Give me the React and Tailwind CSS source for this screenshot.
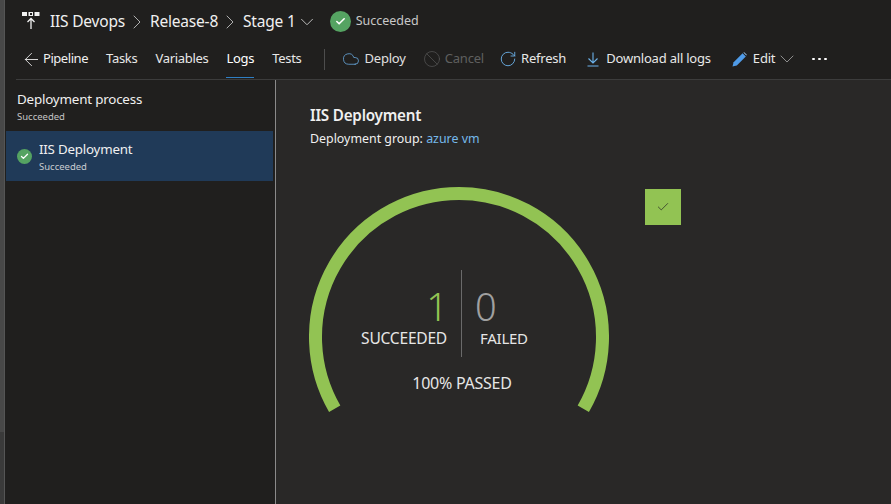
import React from "react";
import { ArrowLeft, ChevronDown, ChevronRight, Cloud, Ban, RotateCw, Check } from "lucide-react";

const tabs = ["Tasks", "Variables", "Logs", "Tests"];

const StatusDot = ({ size, icon }) => (
  <span className={`flex shrink-0 items-center justify-center rounded-full bg-[#55a362] ${size}`}>
    <Check size={icon} strokeWidth={3.5} className="text-white" />
  </span>
);

const AppIcon = () => (
  <svg width="18" height="18" viewBox="0 0 18 18" className="shrink-0">
    <rect x="0" y="0" width="5" height="4" fill="#f2f2f2" />
    <rect x="6.5" y="0" width="4.5" height="4" fill="#f2f2f2" />
    <rect x="12.5" y="0" width="5" height="4" fill="#f2f2f2" />
    <rect x="8" y="1" width="2" height="2" fill="#1f1f1f" />
    <path d="M9 17V6.5M5.5 10L9 6.5L12.5 10" stroke="#f2f2f2" strokeWidth="1.3" fill="none" />
  </svg>
);

const DownloadIcon = () => (
  <svg width="12" height="15" viewBox="0 0 12 15" className="shrink-0">
    <path d="M6 0.5V11M1.5 6.5L6 11L10.5 6.5M0.5 14H11.5" stroke="#6cb2eb" strokeWidth="1.1" fill="none" />
  </svg>
);

const PencilIcon = () => (
  <svg width="15" height="15" viewBox="0 0 15 15" className="shrink-0">
    <path d="M0.5 14.5L1.6 10.2L10.6 1.2L13.8 4.4L4.8 13.4Z" fill="#4f9be8" />
    <path d="M11.4 0.6L12.2 0.2L14.8 2.8L14.4 3.6Z" fill="#9cc9f2" />
  </svg>
);

const App = () => {
  return (
    <div className="flex h-[504px] w-[891px] overflow-hidden bg-[#201f1e] font-['Noto_Sans',sans-serif] text-[#f0f0f0]">
      <div className="flex w-[5px] shrink-0 flex-col border-r border-[#555]">
        <div className="h-[432px] bg-[#484848]" />
        <div className="flex-1 bg-[#3a3a3a]" />
      </div>
      <div className="flex min-w-0 flex-1 flex-col">
        <header className="h-[80px] shrink-0 pl-[11px]">
          <div className="h-full border-b border-[#3c3c3c]">
            <div className="flex h-[43px] items-center">
              <div className="ml-[6px] mr-[10px] mb-[1px]"><AppIcon /></div>
              <span className="text-[15.5px] tracking-[-0.2px]">IIS Devops</span>
              <ChevronRight size={24} strokeWidth={0.9} className="text-[#c0c0c0]" />
              <span className="ml-[1px] text-[15.5px] tracking-[-0.2px]">Release-8</span>
              <ChevronRight size={24} strokeWidth={0.9} className="text-[#c0c0c0]" />
              <span className="ml-[1px] text-[15.5px] tracking-[-0.2px]">Stage 1</span>
              <ChevronDown size={22} strokeWidth={1} className="mr-[12px] text-[#c8c8c8]" />
              <StatusDot size="h-[21px] w-[21px]" icon={11} />
              <span className="ml-[5px] text-[12.5px] text-[#c8c8c8]">Succeeded</span>
            </div>
            <nav className="flex h-[32px] items-center text-[13px]">
              <ArrowLeft size={21} strokeWidth={1} className="ml-[5px] mr-[1px]" />
              <span className="tracking-[-0.45px]">Pipeline</span>
              {tabs.map((t) => (
                <span
                  key={t}
                  className={`relative ml-[18px] tracking-[-0.3px] ${t === "Logs" ? "text-white" : "text-[#e8e8e8]"}`}
                >
                  {t}
                  {t === "Logs" && <span className="absolute -bottom-[9px] left-0 h-[1px] w-full bg-[#2f7fc4]" />}
                </span>
              ))}
              <span className="ml-[22px] h-[21px] w-px bg-[#4d4d4d]" />
              <Cloud size={18} strokeWidth={1} className="ml-[17px] mr-[5px] text-[#6cb2eb]" />
              <span className="tracking-[-0.2px] text-[#e0e0e0]">Deploy</span>
              <Ban size={18} strokeWidth={0.9} className="ml-[17px] mr-[4px] text-[#5a5a5a]" />
              <span className="tracking-[-0.2px] text-[#5f5f5f]">Cancel</span>
              <RotateCw size={18} strokeWidth={1.2} className="ml-[15px] mr-[4px] text-[#6cb2eb]" />
              <span className="tracking-[-0.2px] text-[#e8e8e8]">Refresh</span>
              <span className="ml-[21px] mr-[7px]"><DownloadIcon /></span>
              <span className="tracking-[-0.2px] text-[#e8e8e8]">Download all logs</span>
              <span className="ml-[21px] mr-[6px]"><PencilIcon /></span>
              <span className="tracking-[-0.2px] text-[#e8e8e8]">Edit</span>
              <ChevronDown size={24} strokeWidth={0.8} className="text-[#aaa]" />
              <span className="ml-[13px] flex gap-[3px]">
                <i className="h-[2px] w-[3px] rounded-full bg-white" />
                <i className="h-[2px] w-[3px] rounded-full bg-white" />
                <i className="h-[2px] w-[3px] rounded-full bg-white" />
              </span>
            </nav>
          </div>
        </header>

        <div className="flex min-h-0 flex-1">
          <aside className="w-[271px] shrink-0 border-r border-[#8a8a8a] pl-px pt-[11px]">
            <div className="pl-[11px] text-[13.4px] leading-[17px] tracking-[-0.2px]">Deployment process</div>
            <div className="mt-[2px] pl-[11px] text-[9.5px] leading-[14px] text-[#c4c4c4]">Succeeded</div>
            <div className="mt-[7px] flex h-[50px] w-[267px] items-center bg-[#203a58] pl-[11px]">
              <StatusDot size="h-[15px] w-[15px]" icon={9} />
              <div className="ml-[7px] mt-[3px]">
                <div className="text-[13.3px] leading-[17px] tracking-[-0.2px]">IIS Deployment</div>
                <div className="mt-[2px] text-[9.5px] leading-[14px] text-[#c8ccd0]">Succeeded</div>
              </div>
            </div>
          </aside>

          <main className="relative flex-1 bg-[#292827] pl-[34px] pt-[25px]">
            <h1 className="text-[15.2px] font-semibold leading-[20px] tracking-[-0.2px]">IIS Deployment</h1>
            <p className="mt-[5px] text-[12.4px] leading-[17px]">
              Deployment group: <span className="text-[#75b9eb]">azure vm</span>
            </p>
            <div className="relative -ml-px mt-[40px] h-[230px] w-[300px]">
              <svg width="300" height="230" viewBox="0 0 300 230" className="absolute inset-0">
                <path
                  d="M25.7 221.75A143.5 143.5 0 1 1 274.3 221.75"
                  fill="none"
                  stroke="#92c353"
                  strokeWidth="13"
                />
              </svg>
              <div className="absolute left-[31px] top-[83px] flex h-[87px] w-[240px]">
                <div className="flex w-[122px] flex-col items-end border-r border-[#6a6a6a] pr-[14px]">
                  <span className="mt-[13px] mr-[-1px] text-[38px] font-light leading-[46px] text-[#92c353]">1</span>
                  <span className="mt-[-1px] text-[15.6px] leading-[20px] tracking-[-0.25px] text-[#e6e6e6]">SUCCEEDED</span>
                </div>
                <div className="flex flex-col items-start">
                  <span className="mt-[13px] ml-[13px] text-[38px] font-light leading-[46px] text-[#a0a0a0]">0</span>
                  <span className="ml-[18px] mt-[-1px] text-[15px] leading-[20px] tracking-[-0.25px] text-[#e6e6e6]">FAILED</span>
                </div>
              </div>
              <div className="absolute left-0 top-[186px] w-[306px] text-center text-[16px] leading-[20px] tracking-[-0.25px] text-[#e6e6e6]">
                100% PASSED
              </div>
            </div>
            <div className="absolute left-[369px] top-[109px] flex h-[36px] w-[36px] items-center justify-center bg-[#92c353]">
              <Check size={14} strokeWidth={1.2} className="text-[#222]" />
            </div>
          </main>
        </div>
      </div>
    </div>
  );
};

export default App;
